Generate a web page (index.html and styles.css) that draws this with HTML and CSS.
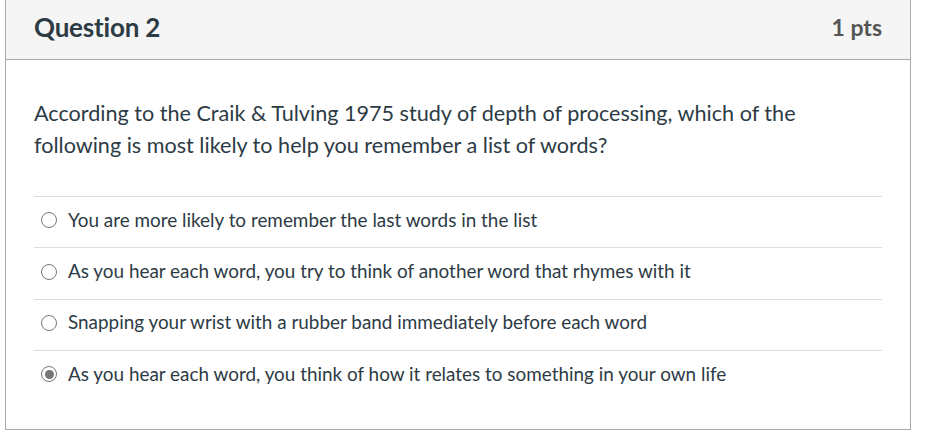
FILE: index.html
```html
<!DOCTYPE html>
<html>
<head>
<meta charset="utf-8">
<link rel="stylesheet" href="styles.css">
</head>
<body>
<div class="question">
  <div class="header">
    <h2 class="title">Question 2</h2>
    <div class="pts">1 pts</div>
  </div>
  <div class="body">
    <p class="text">According to the Craik &amp; Tulving 1975 study of depth of processing, which of the following is most likely to help you remember a list of words?</p>
    <div class="answers">
      <label class="answer"><span class="radio"></span>You are more likely to remember the last words in the list</label>
      <label class="answer"><span class="radio"></span>As you hear each word, you try to think of another word that rhymes with it</label>
      <label class="answer"><span class="radio"></span>Snapping your wrist with a rubber band immediately before each word</label>
      <label class="answer"><span class="radio checked"></span>As you hear each word, you think of how it relates to something in your own life</label>
    </div>
  </div>
</div>
</body>
</html>
```
FILE: styles.css
```css
html, body {
  margin: 0;
  padding: 0;
  background: #fff;
}
body {
  font-family: Lato, "Open Sans", sans-serif;
  color: #2d3b45;
}
.question {
  box-sizing: border-box;
  width: 906px;
  margin: -1px 0 0 5px;
  border: 1px solid #aaaaaa;
  height: 431px;
}
.header {
  display: flex;
  align-items: center;
  justify-content: space-between;
  height: 60px;
  box-sizing: border-box;
  background: #f5f5f5;
  border-bottom: 1px solid #aaaaaa;
  padding: 0 28px 5px 28px;
}
.title {
  margin: 0;
  font-size: 26px;
  font-weight: 700;
  color: #2d3b45;
  letter-spacing: -0.2px;
}
.pts {
  font-size: 23px;
  font-weight: 700;
  color: #555;
}
.body {
  padding: 37px 28px 0 28px;
}
.text {
  margin: 0;
  font-size: 21.6px;
  line-height: 32px;
  width: 800px;
}
.answers {
  margin-top: 35px;
}
.answer {
  display: flex;
  align-items: center;
  height: 51.4px;
  border-top: 1px solid #dddddd;
  font-size: 18.9px;
  padding: 0 0 6px 7px;
  box-sizing: border-box;
}
.radio {
  box-sizing: border-box;
  width: 16px;
  height: 16px;
  border: 1.5px solid #777;
  border-radius: 50%;
  margin-right: 11px;
  margin-top: 2px;
  display: flex;
  align-items: center;
  justify-content: center;
  background: #fff;
}
.radio.checked::after {
  content: "";
  width: 9px;
  height: 9px;
  border-radius: 50%;
  background: #777;
}
```
